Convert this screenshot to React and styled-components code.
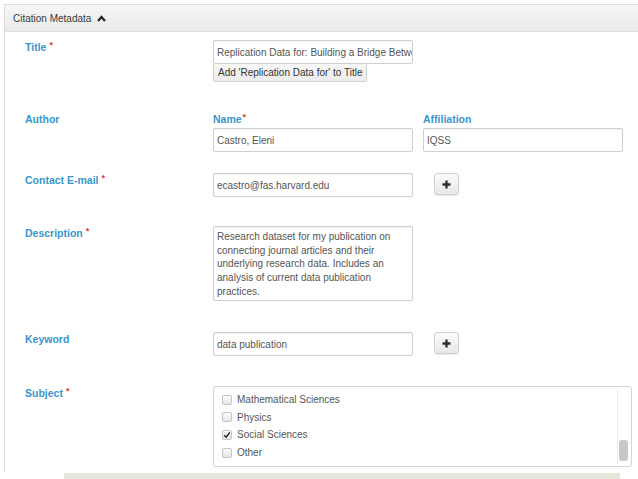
import React from 'react';
import styled, { createGlobalStyle } from 'styled-components';

const GlobalStyle = createGlobalStyle`
	html, body {
		margin: 0;
		padding: 0;
		background: #fff;
		overflow: hidden;
	}
	body {
		font-family: "Liberation Sans", Arial, sans-serif;
		color: #333;
	}
`;

const blue = '#3a96c8';

const Page = styled.div`
	width: 638px;
	height: 479px;
	padding-top: 4px;
	box-sizing: border-box;
`;

const Panel = styled.section`
	margin-left: 4px;
	width: 650px;
	border: 1px solid #dcdcdc;
	border-bottom: none;
	border-right: none;
`;

const PanelHeader = styled.div`
	height: 26px;
	display: flex;
	align-items: center;
	gap: 6px;
	padding-left: 8px;
	background: linear-gradient(#f6f6f6, #e9e9e9);
	border-bottom: 1px solid #dedede;
	font-size: 10px;
	color: #3a3a3a;
`;

const PanelBody = styled.div`
	padding: 8px 0 5px 20px;
	display: flex;
	flex-direction: column;
`;

const Row = styled.div`
	display: flex;
	margin-top: ${p => p.$mt || 0}px;
`;

const Label = styled.div`
	width: 188px;
	flex: none;
	font-size: 10.5px;
	font-weight: bold;
	color: ${blue};
	line-height: 14px;
`;

const Req = styled.span`
	color: #d43f3a;
	font-size: 9px;
	vertical-align: top;
	line-height: 10px;
	margin-left: ${p => (p.$tight ? 1 : 3)}px;
`;

const Field = styled.div`
	display: flex;
	flex-direction: column;
	align-items: flex-start;
`;

const FieldRow = styled.div`
	display: flex;
	align-items: flex-start;
	gap: ${p => p.$gap || 0}px;
`;

const SubLabel = styled(Label)`
	width: auto;
	margin-bottom: 2px;
`;

const TextInput = styled.input`
	width: 200px;
	height: 24px;
	box-sizing: border-box;
	border: 1px solid #cfcfcf;
	border-radius: 2px;
	box-shadow: inset 0 1px 1px rgba(0, 0, 0, 0.06);
	padding: 0 0 0 3px;
	font-family: inherit;
	font-size: 10px;
	color: #555;
	background: #fff;
	outline: none;
`;

const TextArea = styled.textarea`
	width: 200px;
	height: 75px;
	box-sizing: border-box;
	border: 1px solid #cfcfcf;
	border-radius: 2px;
	box-shadow: inset 0 1px 1px rgba(0, 0, 0, 0.06);
	padding: 3px 4px 0 3px;
	font-family: inherit;
	font-size: 10px;
	line-height: 13.7px;
	color: #555;
	resize: none;
	overflow: hidden;
	outline: none;
`;

const SmallButton = styled.button`
	height: 18px;
	box-sizing: border-box;
	padding: 0 4px;
	border: 1px solid #d2d2d2;
	border-top: none;
	background: linear-gradient(#f7f7f7, #ececec);
	font-family: inherit;
	font-size: 10px;
	color: #333;
	border-radius: 0 0 2px 2px;
`;

const AddButton = styled.button`
	width: 25px;
	height: 22px;
	box-sizing: border-box;
	padding: 0;
	border: 1px solid #d0d0d0;
	border-radius: 3px;
	background: linear-gradient(#fbfbfb, #e8e8e8);
	box-shadow: 0 1px 1px rgba(0, 0, 0, 0.08);
	display: flex;
	align-items: center;
	justify-content: center;
	margin-left: 21px;
`;

const ChoiceBox = styled.div`
	width: 419px;
	height: 81px;
	box-sizing: border-box;
	border: 1px solid #d4d4d4;
	border-radius: 3px;
	display: flex;
`;

const ChoiceList = styled.ul`
	list-style: none;
	margin: 0;
	padding: 4px 0 0 8px;
	flex: 1;
`;

const Choice = styled.li`
	display: flex;
	align-items: center;
	gap: 5px;
	height: 17.6px;
	font-size: 10px;
	color: #555;
`;

const Check = styled.span`
	width: 10px;
	height: 10px;
	box-sizing: border-box;
	border: 1px solid #c4c4c4;
	border-radius: 2px;
	background: linear-gradient(#fdfdfd, #e4e4e4);
	display: flex;
	align-items: center;
	justify-content: center;
`;

const ScrollTrack = styled.div`
	width: 9px;
	margin: 2px 2px 2px 0;
	border-left: 1px solid #ececec;
	display: flex;
	flex-direction: column;
	justify-content: flex-end;
	padding: 0 1px 3px 1px;
`;

const ScrollThumb = styled.div`
	height: 21px;
	border-radius: 3px;
	background: #c8c8c8;
`;

const Shelf = styled.div`
	margin: 1px 0 0 64px;
	width: 556px;
	height: 6px;
	background: #e6e6dd;
`;

const ChevronUp = () => (
	<svg width="9" height="7" viewBox="0 0 9 7">
		<polyline points="1,6 4.5,2 8,6" fill="none" stroke="#2b2b2b" strokeWidth="2.4" />
	</svg>
);

const Plus = () => (
	<svg width="9" height="9" viewBox="0 0 9 9">
		<path d="M4.5 0.5v8M0.5 4.5h8" stroke="#2e2e2e" strokeWidth="2.3" />
	</svg>
);

const Tick = () => (
	<svg width="8" height="8" viewBox="0 0 8 8">
		<polyline points="1.3,4.2 3.1,6.2 6.8,1.4" fill="none" stroke="#222" strokeWidth="1.5" />
	</svg>
);

const subjects = [
	{ name: 'Mathematical Sciences', checked: false },
	{ name: 'Physics', checked: false },
	{ name: 'Social Sciences', checked: true },
	{ name: 'Other', checked: false },
];

const description =
	'Research dataset for my publication on connecting journal articles and their underlying research data. Includes an analysis of current data publication practices.';

export default function App() {
	return (
		<Page>
			<GlobalStyle />
			<Panel>
				<PanelHeader>
					Citation Metadata
					<ChevronUp />
				</PanelHeader>
				<PanelBody>
					<Row>
						<Label>
							Title<Req>*</Req>
						</Label>
						<Field>
							<TextInput readOnly value="Replication Data for: Building a Bridge Between Journal Articles and Research Data" />
							<SmallButton>Add 'Replication Data for' to Title</SmallButton>
						</Field>
					</Row>

					<Row $mt={30}>
						<Label>Author</Label>
						<FieldRow $gap={10}>
							<Field>
								<SubLabel>
									Name<Req $tight>*</Req>
								</SubLabel>
								<TextInput readOnly value="Castro, Eleni" />
							</Field>
							<Field>
								<SubLabel>Affiliation</SubLabel>
								<TextInput readOnly value="IQSS" />
							</Field>
						</FieldRow>
					</Row>

					<Row $mt={21}>
						<Label>
							Contact E-mail<Req>*</Req>
						</Label>
						<FieldRow>
							<TextInput readOnly value="ecastro@fas.harvard.edu" />
							<AddButton>
								<Plus />
							</AddButton>
						</FieldRow>
					</Row>

					<Row $mt={29}>
						<Label>
							Description<Req>*</Req>
						</Label>
						<TextArea readOnly value={description} />
					</Row>

					<Row $mt={31}>
						<Label>Keyword</Label>
						<FieldRow>
							<TextInput readOnly value="data publication" />
							<AddButton>
								<Plus />
							</AddButton>
						</FieldRow>
					</Row>

					<Row $mt={30}>
						<Label>
							Subject<Req>*</Req>
						</Label>
						<ChoiceBox>
							<ChoiceList>
								{subjects.map(s => (
									<Choice key={s.name}>
										<Check>{s.checked && <Tick />}</Check>
										{s.name}
									</Choice>
								))}
							</ChoiceList>
							<ScrollTrack>
								<ScrollThumb />
							</ScrollTrack>
						</ChoiceBox>
					</Row>
				</PanelBody>
			</Panel>
			<Shelf />
		</Page>
	);
}
